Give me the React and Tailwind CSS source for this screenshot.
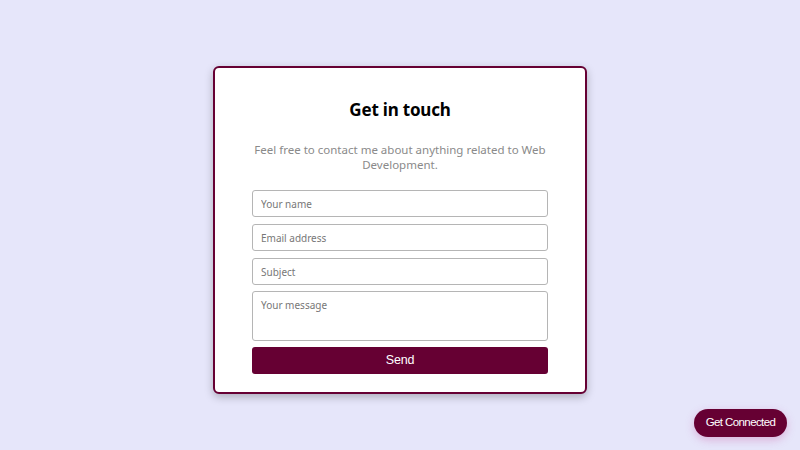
export default function App() {
  return (
    <main className="relative min-h-screen w-full bg-[#e6e6fa] flex justify-center pt-[66px]" style={{ height: 450 }}>
      <div className="w-[374px] h-[328px] bg-white border-2 border-[#660033] rounded-[6px] shadow-[0_3px_8px_rgba(0,0,0,0.25)] flex flex-col items-center">
        <h1 className="mt-[29px] text-[17px] leading-[26px] font-bold text-black font-['Noto_Sans',sans-serif] tracking-[-0.2px]">
          Get in touch
        </h1>
        <p className="mt-[19px] w-[296px] text-center text-[11.5px] leading-[15px] text-[#8a8a8a] font-['Noto_Sans',sans-serif]">
          Feel free to contact me about anything related to Web Development.
        </p>
        <form className="mt-[18px] w-[296px] flex flex-col gap-[7px]" onSubmit={(e) => e.preventDefault()}>
          <input
            placeholder="Your name"
            className="h-[27px] w-full border border-[#b5b5b5] rounded-[3px] px-[8px] text-[10px] font-['Noto_Sans',sans-serif] placeholder:text-[#777] outline-none"
          />
          <input
            placeholder="Email address"
            className="h-[27px] w-full border border-[#b5b5b5] rounded-[3px] px-[8px] text-[10px] font-['Noto_Sans',sans-serif] placeholder:text-[#777] outline-none"
          />
          <input
            placeholder="Subject"
            className="h-[27px] w-full border border-[#b5b5b5] rounded-[3px] px-[8px] text-[10px] font-['Noto_Sans',sans-serif] placeholder:text-[#777] outline-none"
          />
          <textarea
            placeholder="Your message"
            className="-mt-[1px] h-[50px] w-full resize-none border border-[#b5b5b5] rounded-[3px] px-[8px] py-[6px] text-[10px] font-['Noto_Sans',sans-serif] placeholder:text-[#777] outline-none"
          />
          <button
            type="submit"
            className="-mt-[1px] h-[27px] w-full bg-[#660033] rounded-[3px] text-white text-[12.5px] tracking-[-0.2px] font-['Liberation_Sans',sans-serif]"
          >
            Send
          </button>
        </form>
      </div>

      <button className="absolute left-[694px] top-[409px] h-[28px] w-[93px] rounded-full bg-[#660033] text-white text-[11.5px] tracking-[-0.6px] font-['Liberation_Sans',sans-serif] shadow-[0_3px_8px_rgba(200,80,160,0.35)]">
        Get Connected
      </button>
    </main>
  );
}
